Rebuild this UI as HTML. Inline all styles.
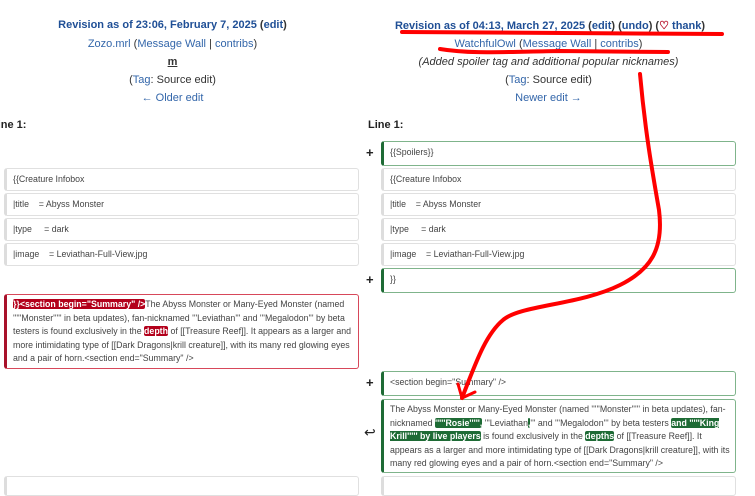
<!DOCTYPE html>
<html><head><meta charset="utf-8"><style>
body{margin:0;width:755px;height:484px;overflow:hidden;background:#fff;font-family:"Liberation Sans",sans-serif;color:#333;position:relative}
.c{position:absolute;text-align:center;font-size:11px;white-space:nowrap}
.b{color:#1f4f96;font-weight:bold}
a,.l{color:#3366aa}
.box{position:absolute;border:1px solid #e0e0e0;border-left:3px solid #ddd;border-radius:3px;box-sizing:border-box;font-size:8.8px;color:#444;padding:3px 4px 0 6px;line-height:13.6px;overflow:hidden}
.add{border-color:#7fb48b;border-left:3px solid #1e6b35}
.del{border-color:#d7485a;border-left:3px solid #a8112a}
.plus{position:absolute;font-size:13px;font-weight:bold;color:#222;left:366px}
.hr{background:#b3001b;color:#fff;font-weight:bold;border-radius:2px}
.hg{background:#1e6b35;color:#fff;font-weight:bold;border-radius:2px}
</style></head><body>
<div class="c b" style="left:0;width:345px;top:19px">Revision as of 23:06, February 7, 2025 <span style="color:#333">(</span>edit<span style="color:#333">)</span></div>
<div class="c l" style="left:0;width:345px;top:38px">Zozo.mrl <span style="color:#333">(</span>Message Wall <span style="color:#333">|</span> contribs<span style="color:#333">)</span></div>
<div class="c" style="left:0;width:345px;top:56px;font-weight:bold;text-decoration:underline">m</div>
<div class="c" style="left:0;width:345px;top:74px">(<span class="l">Tag</span>: Source edit)</div>
<div class="c l" style="left:0;width:345px;top:92px">← Older edit</div>
<div style="position:absolute;left:-9px;top:119px;font-size:11px;font-weight:bold;color:#222">Line 1:</div>

<div class="c b" style="left:380px;width:340px;top:19px">Revision as of 04:13, March 27, 2025 <span style="color:#333">(</span>edit<span style="color:#333">)</span> <span style="color:#333">(</span>undo<span style="color:#333">)</span> <span style="color:#333">(</span><span style="color:#b3001b">♡</span> thank<span style="color:#333">)</span></div>
<div class="c l" style="left:380px;width:337px;top:38px">WatchfulOwl <span style="color:#333">(</span>Message Wall <span style="color:#333">|</span> contribs<span style="color:#333">)</span></div>
<div class="c" style="left:380px;width:337px;top:56px;font-style:italic">(Added spoiler tag and additional popular nicknames)</div>
<div class="c" style="left:380px;width:337px;top:74px">(<span class="l">Tag</span>: Source edit)</div>
<div class="c l" style="left:380px;width:337px;top:92px">Newer edit →</div>
<div style="position:absolute;left:368px;top:119px;font-size:11px;font-weight:bold;color:#222">Line 1:</div>

<div class="box" style="left:4px;top:168px;width:355px;height:23px;padding-top:4px">{{Creature Infobox</div>
<div class="box" style="left:4px;top:193px;width:355px;height:23px;padding-top:4px">|title &nbsp;&nbsp; = Abyss Monster</div>
<div class="box" style="left:4px;top:218px;width:355px;height:23px;padding-top:4px">|type &nbsp;&nbsp;&nbsp; = dark</div>
<div class="box" style="left:4px;top:243px;width:355px;height:23px;padding-top:4px">|image &nbsp;&nbsp; = Leviathan-Full-View.jpg</div>
<div class="box del" style="left:4px;top:294px;width:355px;height:75px"><span class="hr">}}&lt;section begin="Summary" /&gt;</span>The Abyss Monster or Many-Eyed Monster (named '''''Monster''''' in beta updates), fan-nicknamed '''Leviathan''' and '''Megalodon''' by beta testers is found exclusively in the <span class="hr">depth</span> of [[Treasure Reef]]. It appears as a larger and more intimidating type of [[Dark Dragons|krill creature]], with its many red glowing eyes and a pair of horn.&lt;section end="Summary" /&gt;</div>

<div class="plus" style="top:145px">+</div>
<div class="box add" style="left:381px;top:141px;width:355px;height:25px;padding-top:4px">{{Spoilers}}</div>
<div class="box" style="left:381px;top:168px;width:355px;height:23px;padding-top:4px">{{Creature Infobox</div>
<div class="box" style="left:381px;top:193px;width:355px;height:23px;padding-top:4px">|title &nbsp;&nbsp; = Abyss Monster</div>
<div class="box" style="left:381px;top:218px;width:355px;height:23px;padding-top:4px">|type &nbsp;&nbsp;&nbsp; = dark</div>
<div class="box" style="left:381px;top:243px;width:355px;height:23px;padding-top:4px">|image &nbsp;&nbsp; = Leviathan-Full-View.jpg</div>
<div class="plus" style="top:272px">+</div>
<div class="box add" style="left:381px;top:268px;width:355px;height:25px;padding-top:4px">}}</div>
<div class="plus" style="top:375px">+</div>
<div class="box add" style="left:381px;top:371px;width:355px;height:25px;padding-top:4px">&lt;section begin="Summary" /&gt;</div>
<div style="position:absolute;left:364px;top:424px;font-size:14px;color:#222">↩</div>
<div class="box add" style="left:381px;top:399px;width:355px;height:74px">The Abyss Monster or Many-Eyed Monster (named '''''Monster''''' in beta updates), fan-nicknamed <span class="hg">'''''Rosie''''',</span> '''Leviathan<span class="hg">,</span>''' and '''Megalodon''' by beta testers <span class="hg">and '''''King Krill''''' by live players</span> is found exclusively in the <span class="hg">depths</span> of [[Treasure Reef]]. It appears as a larger and more intimidating type of [[Dark Dragons|krill creature]], with its many red glowing eyes and a pair of horn.&lt;section end="Summary" /&gt;</div>
<div class="box" style="left:381px;top:476px;width:355px;height:20px"></div>
<div class="box" style="left:4px;top:476px;width:355px;height:20px"></div>

<svg width="755" height="484" style="position:absolute;left:0;top:0" fill="none" stroke="#f00" stroke-linecap="round">
<path d="M402 32 L722 34" stroke-width="4"/>
<path d="M440 49 C470 54 500 52 560 51 L668 52" stroke-width="4"/>
<path d="M640 74 C645 130 652 170 659 210 C664 250 650 270 620 285 C580 305 520 305 503 320 C485 335 475 365 462 398" stroke-width="4"/>
<path d="M462 398 L475 392 M462 398 L458 384" stroke-width="3"/>
</svg>
</body></html>
